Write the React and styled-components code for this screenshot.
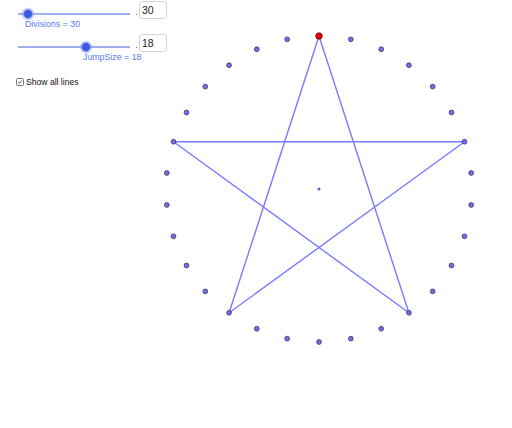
import React from 'react';
import styled, { createGlobalStyle } from "styled-components";

const GlobalStyle = createGlobalStyle`
body{
    margin: 0;
    background: #fff;
    font-family: "Liberation Sans", Arial, sans-serif;
}
`

const CENTER = { x: 319, y: 189 };
const RADIUS = 153;
const TRACK = 112;
const PANEL = 150;

const sliders = [
    { name: "Divisions", value: 30, min: 20, max: 130 },
    { name: "JumpSize", value: 18, min: 1, max: 29 },
];

function knobOffset(s) {
    return Math.round(((s.value - s.min) / (s.max - s.min)) * TRACK);
}

function Slider({ slider }) {
    const left = knobOffset(slider);
    return (
        <SliderBlock>
            <SliderRow>
                <Track>
                    <Knob style={{ left: left - 5 }} />
                </Track>
                <Sep />
                <ValueBox>{slider.value}</ValueBox>
            </SliderRow>
            <SliderLabel style={{ paddingLeft: 18 + left - 3 }}>
                {slider.name} = {slider.value}
            </SliderLabel>
        </SliderBlock>
    );
}

function Star({ divisions, jump }) {
    const pts = [];
    for (let i = 0; i < divisions; i++) {
        const a = (90 - (360 / divisions) * i) * Math.PI / 180;
        pts.push({ x: CENTER.x + RADIUS * Math.cos(a), y: CENTER.y - RADIUS * Math.sin(a) });
    }
    const path = [0];
    let cur = jump % divisions;
    while (cur !== 0 && path.length <= divisions) {
        path.push(cur);
        cur = (cur + jump) % divisions;
    }
    const d = path.map((p, i) => (i === 0 ? "M" : "L") + pts[p].x.toFixed(1) + " " + pts[p].y.toFixed(1)).join(" ") + " Z";

    return (
        <Canvas viewBox={`${PANEL} 0 ${512 - PANEL} 428`} width={512 - PANEL} height="428">
            <path d={d} fill="none" stroke="#7b7bff" strokeWidth="1.4" strokeLinejoin="round" />
            {pts.map((p, i) => i === 0 ? null : (
                <circle key={i} cx={p.x} cy={p.y} r="2.4" fill="#6f6fe8" stroke="#2a2a55" strokeWidth="0.7" />
            ))}
            <circle cx={CENTER.x} cy={CENTER.y} r="1.5" fill="#5b5be0" />
            <circle cx={pts[0].x} cy={pts[0].y} r="3.3" fill="#ee0000" stroke="#551010" strokeWidth="0.7" />
        </Canvas>
    );
}

export default function App() {
    return (
        <>
            <GlobalStyle />
            <Page>
                <Controls>
                    {sliders.map(s => <Slider key={s.name} slider={s} />)}
                    <CheckRow>
                        <CheckBox>
                            <svg width="8" height="8" viewBox="0 0 8 8">
                                <path d="M1.6 4.2 L3.2 5.9 L6.4 1.8" fill="none" stroke="#333" strokeWidth="1.1" />
                            </svg>
                        </CheckBox>
                        Show all lines
                    </CheckRow>
                </Controls>
                <Star divisions={30} jump={18} />
            </Page>
        </>
    );
}

const Page = styled.div`
display: flex;
width: 512px;
height: 428px;
overflow: hidden;
background: #fff;
`

const Controls = styled.div`
width: ${PANEL}px;
flex: none;
display: flex;
flex-direction: column;
padding-top: 1px;
gap: 5px;
white-space: nowrap;
overflow: visible;
`

const SliderBlock = styled.div`
display: flex;
flex-direction: column;
`

const SliderRow = styled.div`
display: flex;
align-items: center;
height: 18px;
padding-left: 18px;
`

const Track = styled.div`
position: relative;
width: 112px;
height: 2px;
margin-top: 7px;
background: #9fb0f2;
flex: none;
`

const Knob = styled.span`
position: absolute;
top: -4px;
width: 10px;
height: 10px;
box-sizing: border-box;
border-radius: 50%;
background: #3b5ce0;
border: 1.5px solid #8fa4f0;
box-shadow: 0 0 0 1.5px rgba(120, 145, 235, 0.35);
`

const Sep = styled.span`
width: 9px;
height: 18px;
flex: none;
position: relative;
&::after{
    content: "";
    position: absolute;
    left: 6px;
    bottom: 4px;
    width: 1px;
    height: 1px;
    background: #777;
}
`

const ValueBox = styled.div`
width: 28px;
height: 18px;
flex: none;
box-sizing: border-box;
border: 1px solid #d4d4d4;
border-radius: 3px;
background: #fff;
font-size: 10.5px;
line-height: 16px;
padding-left: 2px;
color: #222;
`

const SliderLabel = styled.div`
font-size: 8.8px;
line-height: 10px;
color: #5878f6;
white-space: nowrap;
`

const CheckRow = styled.label`
display: flex;
align-items: center;
gap: 2px;
margin-top: 10px;
padding-left: 16px;
font-size: 8.6px;
color: #111;
`

const CheckBox = styled.span`
width: 8px;
height: 8px;
box-sizing: border-box;
border: 1px solid #777;
border-radius: 1.5px;
display: flex;
align-items: center;
justify-content: center;
svg{
    display: block;
}
`

const Canvas = styled.svg`
display: block;
flex: none;
`
